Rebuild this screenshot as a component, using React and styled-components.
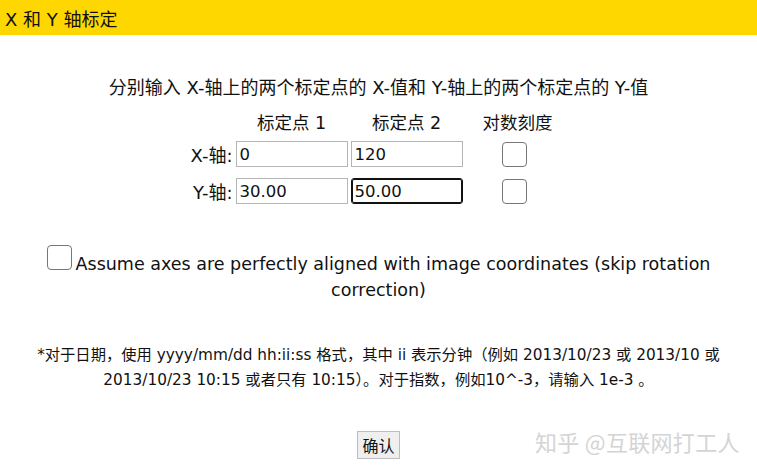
import React from "react";
import styled, { createGlobalStyle } from "styled-components";

const Global = createGlobalStyle`
  html, body { margin: 0; padding: 0; background: #fff; }
  body { font-family: "DejaVu Sans", Verdana, "Noto Sans CJK SC", sans-serif; color: #111; }
  * { box-sizing: border-box; }
`;

const Page = styled.div`
  position: relative;
  width: 757px;
  height: 476px;
  overflow: hidden;
  background: #fff;
`;

const Header = styled.div`
  height: 35px;
  background: #ffd700;
  display: flex;
  align-items: center;
  padding: 1px 0 0 5px;
  font-size: 18px;
  font-family: "DejaVu Sans", "Noto Sans CJK SC", sans-serif;
`;

const Body = styled.div`
  display: flex;
  flex-direction: column;
  align-items: center;
  padding: 0 20px;
`;

const Intro = styled.p`
  margin: 40px 0 0;
  font-size: 18px;
  line-height: 26px;
  text-align: center;
`;

const Grid = styled.div`
  display: grid;
  grid-template-columns: 45px 112px 112px 104px;
  column-gap: 3px;
  row-gap: 11px;
  align-items: center;
  margin-top: 11px;
`;

const ColHead = styled.div`
  text-align: center;
  font-size: 17.5px;
  line-height: 22px;
  margin-bottom: -4px;
  white-space: nowrap;
`;

const RowLabel = styled.div`
  text-align: right;
  font-size: 18px;
  white-space: nowrap;
`;

const TextInput = styled.input`
  width: 112px;
  height: 26px;
  padding: 0 3px;
  font-family: "DejaVu Sans", Verdana, sans-serif;
  font-size: 16.5px;
  color: #111;
  background: #fff;
  border: 1px solid ${(p) => (p.$focused ? "#111" : "#b5b5b5")};
  border-radius: ${(p) => (p.$focused ? "3px" : "0")};
  outline: ${(p) => (p.$focused ? "1px solid #111" : "none")};
  outline-offset: -2px;
`;

const Box = styled.span`
  display: inline-block;
  width: ${(p) => p.$size}px;
  height: ${(p) => p.$size}px;
  border: 1px solid #767676;
  border-radius: 4px;
  background: #fff;
  flex: none;
`;

const BoxCell = styled.div`
  display: flex;
  justify-content: center;
  padding-right: 6px;
`;

const Assume = styled.p`
  margin: 41px 0 0;
  font-size: 17.5px;
  line-height: 26px;
  text-align: center;
`;

const AssumeBox = styled(Box)`
  vertical-align: baseline;
  margin-right: 4px;
`;

const Note = styled.p`
  margin: 40px 0 0;
  font-size: 15.3px;
  line-height: 25px;
  text-align: center;
`;

const Button = styled.button`
  margin-top: 38px;
  height: 28px;
  padding: 0 4px;
  font-family: "Noto Sans CJK SC", sans-serif;
  font-size: 16px;
  color: #111;
  background: #efefef;
  border: 1px solid #bdbdbd;
  border-radius: 0;
`;

const Watermark = styled.div`
  position: absolute;
  left: 535px;
  top: 425px;
  font-family: "Noto Sans CJK SC", sans-serif;
  font-size: 22px;
  color: #d4d4d4;
  letter-spacing: 0.3px;
  text-shadow: 0 0 1px #fff;
`;

export default function App() {
  return (
    <Page>
      <Global />
      <Header>X 和 Y 轴标定</Header>
      <Body>
        <Intro>分别输入 X-轴上的两个标定点的 X-值和 Y-轴上的两个标定点的 Y-值</Intro>
        <Grid>
          <div />
          <ColHead>标定点 1</ColHead>
          <ColHead>标定点 2</ColHead>
          <ColHead>对数刻度</ColHead>

          <RowLabel>X-轴:</RowLabel>
          <TextInput defaultValue="0" />
          <TextInput defaultValue="120" />
          <BoxCell><Box $size={25} /></BoxCell>

          <RowLabel>Y-轴:</RowLabel>
          <TextInput defaultValue="30.00" />
          <TextInput defaultValue="50.00" $focused />
          <BoxCell><Box $size={25} /></BoxCell>
        </Grid>
        <Assume>
          <AssumeBox $size={25} />Assume axes are perfectly aligned with image coordinates (skip rotation correction)
        </Assume>
        <Note>
          *对于日期，使用 yyyy/mm/dd hh:ii:ss 格式，其中 ii 表示分钟（例如 2013/10/23 或 2013/10 或 2013/10/23 10:15 或者只有 10:15）。对于指数，例如10^-3，请输入 1e-3 。
        </Note>
        <Button>确认</Button>
      </Body>
      <Watermark>知乎 @互联网打工人</Watermark>
    </Page>
  );
}
